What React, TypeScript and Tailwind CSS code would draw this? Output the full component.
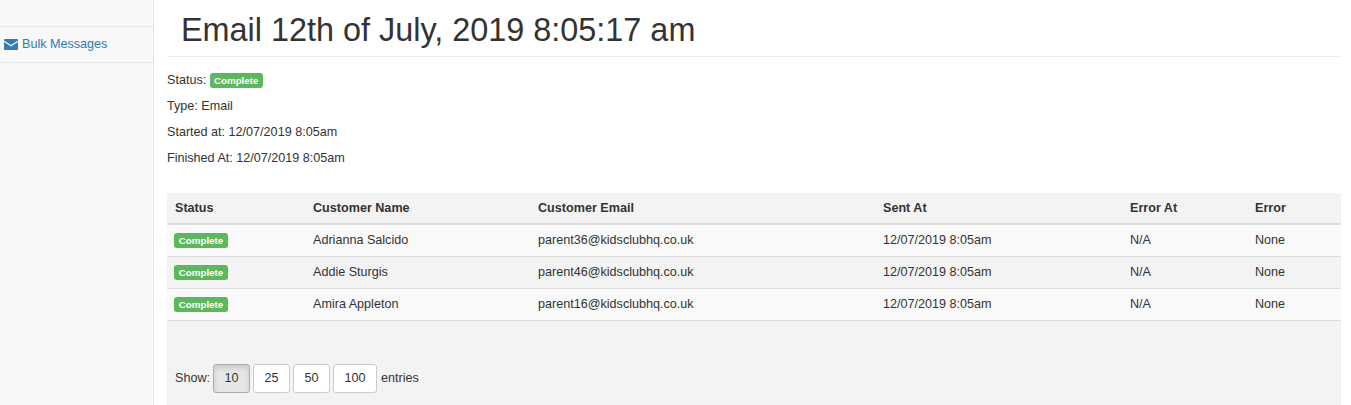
const rows = [
  { name: "Adrianna Salcido", email: "parent36@kidsclubhq.co.uk" },
  { name: "Addie Sturgis", email: "parent46@kidsclubhq.co.uk" },
  { name: "Amira Appleton", email: "parent16@kidsclubhq.co.uk" },
];

function CompleteBadge({ className }: { className?: string }) {
  return (
    <span className={`inline-block h-[15px] rounded-[3px] bg-[#5cb85c] text-center text-[9.75px] font-bold leading-[15px] text-white ${className}`}>
      Complete
    </span>
  );
}

function EnvelopeIcon() {
  return (
    <svg width="14" height="11" viewBox="0 0 14 11" className="shrink-0">
      <path fill="#337ab7" d="M1 0h12a1 1 0 0 1 1 1v.6L7 6 0 1.6V1a1 1 0 0 1 1-1z" />
      <path fill="#337ab7" d="M0 3.1V10a1 1 0 0 0 1 1h12a1 1 0 0 0 1-1V3.1L7 7.5z" />
    </svg>
  );
}

export default function App() {
  return (
    <div className="flex h-[405px] overflow-hidden bg-white font-['Liberation_Sans',Arial,sans-serif] text-[12.6px] text-[#333]">
      <aside className="w-[154px] shrink-0 border-r border-[#e7e7e7] bg-[#f8f8f8] pt-[26px]">
        <a className="flex h-[37px] items-center gap-[4px] border-y border-[#e7e7e7] pb-[1px] pl-[4px] text-[#337ab7]">
          <EnvelopeIcon />
          <span>Bulk Messages</span>
        </a>
      </aside>

      <main className="min-w-0 flex-1 pl-[13px] pr-[10px]">
        <h1 className="h-[57px] border-b border-[#eee] pl-[14px] pt-[10px] text-[32.4px] font-normal leading-[40px]">
          Email 12th of July, 2019 8:05:17 am
        </h1>

        <div className="h-[136px] pt-[10px] leading-[26px]">
          <p>
            Status: <CompleteBadge className="w-[53px] align-[0px]" />
          </p>
          <p>Type: Email</p>
          <p>Started at: 12/07/2019 8:05am</p>
          <p>Finished At: 12/07/2019 8:05am</p>
        </div>

        <div className="h-[212px] bg-[#f3f3f3]">
          <table className="w-full table-fixed border-collapse">
            <colgroup>
              <col className="w-[138px]" />
              <col className="w-[225px]" />
              <col className="w-[345px]" />
              <col className="w-[247px]" />
              <col className="w-[125px]" />
              <col />
            </colgroup>
            <thead>
              <tr className="h-[31px] border-b-2 border-[#ddd] text-left">
                <th className="pl-[8px] font-bold">Status</th>
                <th className="pl-[8px] font-bold">Customer Name</th>
                <th className="pl-[8px] font-bold">Customer Email</th>
                <th className="pl-[8px] font-bold">Sent At</th>
                <th className="pl-[8px] font-bold">Error At</th>
                <th className="pl-[8px] font-bold">Error</th>
              </tr>
            </thead>
            <tbody>
              {rows.map((r, i) => (
                <tr key={r.email} className={`h-[32px] border-b border-[#ddd] ${i % 2 === 0 ? "bg-[#f9f9f9]" : ""}`}>
                  <td className="pl-[7px]">
                    <CompleteBadge className="block w-[54px]" />
                  </td>
                  <td className="pl-[8px]">{r.name}</td>
                  <td className="pl-[8px]">{r.email}</td>
                  <td className="pl-[8px]">12/07/2019 8:05am</td>
                  <td className="pl-[8px]">N/A</td>
                  <td className="pl-[8px]">None</td>
                </tr>
              ))}
            </tbody>
          </table>

          <div className="mt-[43px] flex items-center pl-[8px]">
            <span className="mr-[3px]">Show:</span>
            <button className="mr-[3px] h-[29px] w-[37px] rounded-[3px] border border-[#adadad] bg-[#e6e6e6] shadow-[inset_0_3px_5px_rgba(0,0,0,0.125)]">10</button>
            <button className="mr-[3px] h-[29px] w-[37px] rounded-[3px] border border-[#ccc] bg-white">25</button>
            <button className="mr-[3px] h-[29px] w-[37px] rounded-[3px] border border-[#ccc] bg-white">50</button>
            <button className="mr-[4px] h-[29px] w-[44px] rounded-[3px] border border-[#ccc] bg-white">100</button>
            <span>entries</span>
          </div>
        </div>
      </main>
    </div>
  );
}
